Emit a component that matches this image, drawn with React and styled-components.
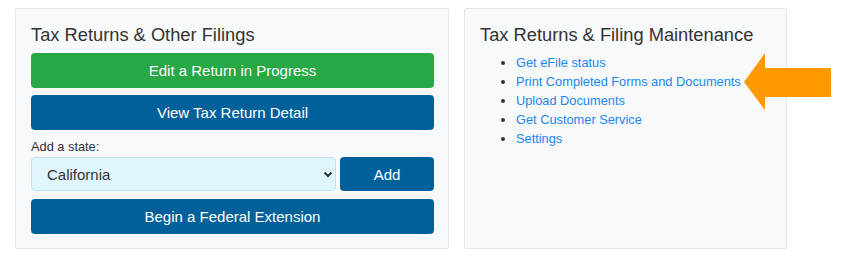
import styled, { createGlobalStyle } from "styled-components";

const GlobalStyle = createGlobalStyle`
  body {
    margin: 0;
    background: #ffffff;
    font-family: "Liberation Sans", Arial, sans-serif;
  }
`;

const Page = styled.div`
  position: relative;
  display: flex;
  align-items: stretch;
  gap: 15px;
  padding: 8px 15px;
  width: 841px;
  box-sizing: border-box;
`;

const Panel = styled.section`
  box-sizing: border-box;
  width: ${(p) => p.$width}px;
  padding: 14px 14px 14px 15px;
  background: #f8f9fa;
  border: 1px solid #e3e7eb;
  border-radius: 2px;
  display: flex;
  flex-direction: column;
`;

const Title = styled.h2`
  margin: 0 0 6px;
  font-size: 18.3px;
  line-height: 24px;
  font-weight: 400;
  color: #333333;
`;

const Button = styled.button`
  box-sizing: border-box;
  height: ${(p) => p.$height || 35}px;
  width: ${(p) => (p.$width ? `${p.$width}px` : "100%")};
  flex-shrink: 0;
  border: none;
  border-radius: 4px;
  background: ${(p) => (p.$variant === "green" ? "#28a745" : "#00619a")};
  color: #ffffff;
  font-family: inherit;
  font-size: 15px;
  cursor: pointer;
  margin-top: ${(p) => p.$mt || 0}px;
`;

const Label = styled.label`
  display: block;
  margin-top: 7px;
  font-size: 12.8px;
  line-height: 19px;
  color: #333333;
`;

const StateRow = styled.div`
  display: flex;
  gap: 4px;
  margin-top: 1px;
`;

const SelectWrap = styled.div`
  position: relative;
  flex: 1;
`;

const Select = styled.select`
  appearance: none;
  box-sizing: border-box;
  width: 100%;
  height: 34px;
  padding: 0 30px 0 15px;
  background: #e1f5fe;
  border: 1px solid #bfe3f8;
  border-radius: 4px;
  font-family: inherit;
  font-size: 15px;
  color: #333333;
`;

const Chevron = styled.svg`
  position: absolute;
  right: 3px;
  top: 14px;
  pointer-events: none;
`;

const LinkList = styled.ul`
  margin: 0;
  padding-left: 36px;
  list-style: disc;
  font-size: 12.8px;
  line-height: 19px;
  color: #333333;
`;

const LinkItem = styled.li`
  a {
    color: #1a86f0;
    text-decoration: none;
  }
`;

const Arrow = styled.svg`
  position: absolute;
  left: 744px;
  top: 53px;
`;

const links = [
  "Get eFile status",
  "Print Completed Forms and Documents",
  "Upload Documents",
  "Get Customer Service",
  "Settings",
];

export default function App() {
  return (
    <>
      <GlobalStyle />
      <Page>
        <Panel $width={434}>
          <Title>Tax Returns &amp; Other Filings</Title>
          <Button $variant="green">Edit a Return in Progress</Button>
          <Button $mt={7}>View Tax Return Detail</Button>
          <Label htmlFor="state">Add a state:</Label>
          <StateRow>
            <SelectWrap>
              <Select id="state" defaultValue="CA">
                <option value="CA">California</option>
              </Select>
              <Chevron width="10" height="7" viewBox="0 0 10 7">
                <path d="M1.5 1.5 L5 5 L8.5 1.5" fill="none" stroke="#333" strokeWidth="2" />
              </Chevron>
            </SelectWrap>
            <Button $width={94} $height={34}>Add</Button>
          </StateRow>
          <Button $mt={8}>Begin a Federal Extension</Button>
        </Panel>
        <Panel $width={323}>
          <Title>Tax Returns &amp; Filing Maintenance</Title>
          <LinkList>
            {links.map((l) => (
              <LinkItem key={l}>
                <a href="#">{l}</a>
              </LinkItem>
            ))}
          </LinkList>
        </Panel>
        <Arrow width="87" height="57" viewBox="0 0 87 57">
          <polygon points="0,29 21,0 21,15 87,15 87,44 21,44 21,57" fill="#ff9900" />
        </Arrow>
      </Page>
    </>
  );
}
